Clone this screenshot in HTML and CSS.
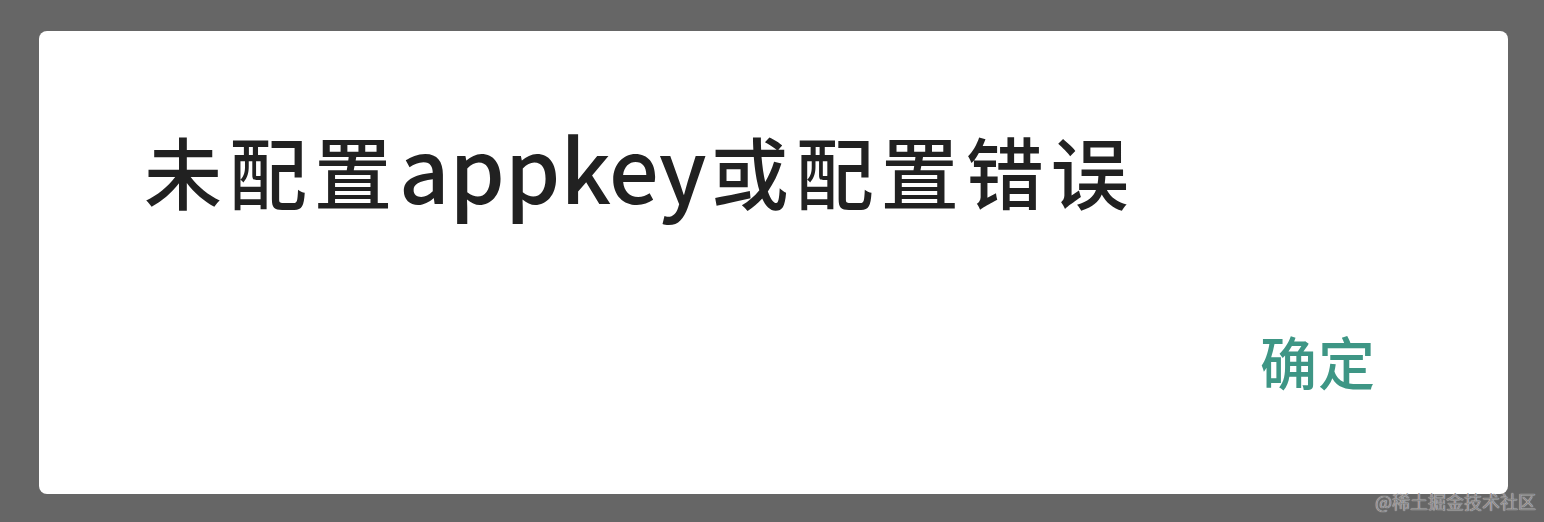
FILE: index.html
```html
<!DOCTYPE html>
<html lang="zh-CN">
<head>
    <meta charset="UTF-8">
    <meta name="viewport" content="width=device-width, initial-scale=1.0">
    <title>提示</title>
    <link rel="stylesheet" href="styles.css">
</head>
<body>
    <div class="dialog">
        <h1 class="dialog-title">未配置<span class="latin">appkey</span>或配置错误</h1>
        <div class="dialog-actions">
            <button class="dialog-btn">确定</button>
        </div>
    </div>

    <span class="watermark">@稀土掘金技术社区</span>
</body>
</html>
```

FILE: styles.css
```css
* {
    margin: 0;
    padding: 0;
    box-sizing: border-box;
}

body {
    height: 100vh;
    padding: 31px 36px 28px 39px;
    background-color: #666666;
    font-family: "Noto Sans CJK SC", "Noto Sans", sans-serif;
    display: flex;
    overflow: hidden;
}

.dialog {
    flex: 1;
    background-color: #fff;
    border-radius: 8px;
    display: flex;
    flex-direction: column;
    justify-content: space-between;
    padding: 96px 132px 105px 105px;
}

.dialog-title {
    font-size: 78px;
    font-weight: 500;
    line-height: 78px;
    letter-spacing: 7px;
    color: #212121;
}

/* latin glyphs of the cjk font run small, bump them up */
.dialog-title .latin {
    font-size: 88px;
    line-height: 78px;
    letter-spacing: 0;
    margin-right: 4px;
}

.dialog-actions {
    display: flex;
    justify-content: flex-end;
}

.dialog-btn {
    background: none;
    border: none;
    font-family: inherit;
    font-size: 57px;
    font-weight: 500;
    line-height: 1;
    letter-spacing: 1px;
    color: #3e9685;
    cursor: pointer;
}

.watermark {
    position: absolute;
    right: 8px;
    bottom: 8px;
    font-size: 18px;
    color: #8a8a8a;
    text-shadow: 0 0 1px #fff;
}
```
